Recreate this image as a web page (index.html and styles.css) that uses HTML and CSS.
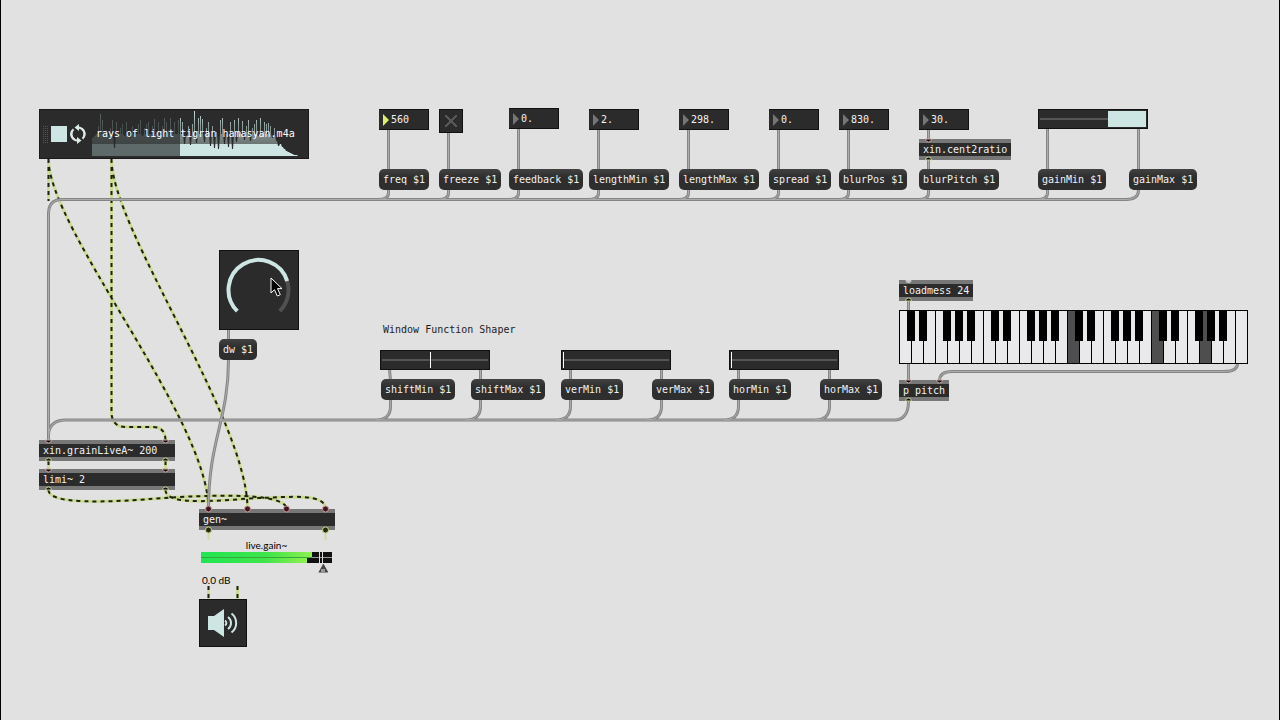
FILE: index.html
```html
<!DOCTYPE html>
<html lang="en">

<head>
    <meta charset="utf-8">
    <title>grain patch</title>
    <link rel="stylesheet" href="styles.css">
</head>

<body>
    <main class="patcher">
        <!-- patch cords -->
        <svg class="cords" aria-hidden="true">
            <defs>
                <path id="signal" d="M48.5 159V201
                    M48.5 159C48.5 229 208.5 419 208.5 509
                    M111.5 159C111.5 229 247.5 419 247.5 509
                    M111.5 159V412Q111.5 427 126 427H153Q165.5 427 165.5 441
                    M48.5 461V470M165.5 461V470
                    M48.5 490C48.5 505 110 502 150 499S286.5 490 286.5 509
                    M165.5 490C165.5 508 230 499 260 498S325.5 493 325.5 509
                    M208.5 586V599M237.5 586V599" />
                <path id="control" d="M1138.5 190Q1138.5 199.5 1126 199.5H62Q48.5 199.5 48.5 214V441
                    M388.5 129V193Q388.5 199.5 378 199.5
                    M448.5 133V193Q448.5 199.5 438 199.5
                    M518.5 129V193Q518.5 199.5 508 199.5
                    M598.5 129V193Q598.5 199.5 588 199.5
                    M688.5 129V193Q688.5 199.5 678 199.5
                    M778.5 129V193Q778.5 199.5 768 199.5
                    M848.5 129V193Q848.5 199.5 838 199.5
                    M928.5 129V193Q928.5 199.5 918 199.5
                    M1047.5 129V193Q1047.5 199.5 1037 199.5
                    M1138.5 129V170
                    M908.5 401Q908.5 420 894 420H66Q48.5 420 48.5 436
                    M389.5 370L390.5 380V406Q390.5 420 376 420
                    M480.5 370V406Q480.5 420 466 420
                    M570.5 370V406Q570.5 420 556 420
                    M661.5 370V406Q661.5 420 647 420
                    M738.5 370V406Q738.5 420 724 420
                    M829.5 370V406Q829.5 420 815 420
                    M908.5 300V311M908.5 363V381
                    M1237.5 363Q1238 371.5 1224 371.5H952Q939.5 371.5 939.5 381
                    M228.5 330V340
                    M228.5 360C228.5 420 208.5 440 208.5 509" />
            </defs>
            <use href="#signal" class="signal-base" />
            <use href="#signal" class="signal-dash" />
            <path class="signal-stub" d="M208.5 531V540M325.5 531V540" />
            <use href="#control" class="control-base" />
            <use href="#control" class="control-core" />
        </svg>

        <!-- playlist -->
        <section class="node player">
            <span class="grip"></span>
            <button class="stop" aria-label="Stop"></button>
            <button class="loop" aria-label="Loop">
                <svg width="18" height="20" viewBox="0 0 18 20">
                    <path class="loop-arc" d="M5.500 15.500A6.500 6.500 0 0 1 4.500 5.300M9 3.500A6.500 6.500 0 0 1 14.800 13" />
                    <path class="loop-arc" d="M3.200 6.500A6.500 6.500 0 0 0 9 16.500M12.500 4.500A6.500 6.500 0 0 1 13.500 14.700" />
                    <path class="loop-head" d="M10 0v7L5.500 3.500zM8 20v-7l4.500 3.500z" />
                </svg>
            </button>
            <div class="clip">
                <svg class="wave" width="216" height="50" viewBox="0 0 216 50">
                    <defs>
                        <clipPath id="waveClip">
                            <path id="wavePath" d="" />
                        </clipPath>
                        <linearGradient id="shade" x1="0" y1="0" x2="0" y2="1">
                            <stop offset="0" stop-color="#2b2b2b" stop-opacity="0" />
                            <stop offset=".5" stop-color="#2b2b2b" stop-opacity=".4" />
                            <stop offset="1" stop-color="#2b2b2b" stop-opacity=".6" />
                        </linearGradient>
                    </defs>
                    <g clip-path="url(#waveClip)">
                        <rect class="played" width="88" height="47" />
                        <rect class="rest" x="88" width="128" height="47" />
                    </g>
                    <rect width="216" height="35" fill="url(#shade)" />
                </svg>
                <span class="clip-name">rays of light tigran hamasyan.m4a</span>
            </div>
        </section>

        <!-- grain parameters -->
        <label class="node number row-value col-freq active"><input type="text" value="560" aria-label="freq"></label>
        <input class="node toggle row-value col-freeze" type="checkbox" aria-label="freeze">
        <label class="node number row-feedback col-feedback"><input type="text" value="0." aria-label="feedback"></label>
        <label class="node number row-value col-length-min"><input type="text" value="2." aria-label="lengthMin"></label>
        <label class="node number row-value col-length-max"><input type="text" value="298." aria-label="lengthMax"></label>
        <label class="node number row-value col-spread"><input type="text" value="0." aria-label="spread"></label>
        <label class="node number row-value col-blur-pos"><input type="text" value="830." aria-label="blurPos"></label>
        <label class="node number row-value col-blur-pitch"><input type="text" value="30." aria-label="blurPitch"></label>
        <input class="node range gain row-value col-gain-min" type="range" value="100" aria-label="gain range">

        <div class="node object ratio col-blur-pitch">xin.cent2ratio</div>

        <button class="node message row-param col-freq">freq $1</button>
        <button class="node message row-param col-freeze">freeze $1</button>
        <button class="node message row-param col-feedback">feedback $1</button>
        <button class="node message row-param col-length-min">lengthMin $1</button>
        <button class="node message row-param col-length-max">lengthMax $1</button>
        <button class="node message row-param col-spread">spread $1</button>
        <button class="node message row-param col-blur-pos">blurPos $1</button>
        <button class="node message row-param col-blur-pitch">blurPitch $1</button>
        <button class="node message row-param col-gain-min">gainMin $1</button>
        <button class="node message row-param col-gain-max">gainMax $1</button>

        <!-- dry / wet -->
        <div class="node dial">
            <svg width="80" height="80" viewBox="0 0 80 80" aria-hidden="true">
                <path class="dial-track" d="M68.200 31.200A30 30 0 0 1 60.700 61.200" />
                <path class="dial-value" d="M18.300 61.200A30 30 0 1 1 68.200 31.200" />
            </svg>
            <input type="range" value="73" aria-label="dry wet">
        </div>
        <button class="node message dry-wet">dw $1</button>

        <!-- window shaper -->
        <p class="node comment">Window Function Shaper</p>
        <input class="node range row-shape col-shift" type="range" value="46" aria-label="shift range">
        <input class="node range row-shape col-ver-min" type="range" value="0" aria-label="ver range">
        <input class="node range row-shape col-hor-min" type="range" value="0" aria-label="hor range">
        <button class="node message row-window col-shift-min">shiftMin $1</button>
        <button class="node message row-window col-shift-max">shiftMax $1</button>
        <button class="node message row-window col-ver-min">verMin $1</button>
        <button class="node message row-window col-ver-max">verMax $1</button>
        <button class="node message row-window col-hor-min">horMin $1</button>
        <button class="node message row-window col-hor-max">horMax $1</button>

        <!-- pitch keyboard -->
        <div class="node object loadmess">loadmess 24</div>
        <div class="node keyboard" id="keyboard"></div>
        <div class="node object pitch">p pitch</div>

        <!-- audio chain -->
        <div class="node object wide grain">xin.grainLiveA~ 200</div>
        <div class="node object wide limi">limi~ 2</div>
        <div class="node object wide gen">gen~</div>

        <section class="node live-gain">
            <label for="gain">live.gain~</label>
            <div class="meter">
                <span class="level left"></span>
                <span class="level right"></span>
            </div>
            <input id="gain" type="range" value="97">
            <output for="gain">0.0 dB</output>
        </section>

        <button class="node dac" aria-label="Audio on">
            <svg width="32" height="30" viewBox="0 0 32 30">
                <path class="cone" d="M1 8h6L17 1v28L7 22H1z" />
                <path class="waves" d="M18 12.500a3 3 0 0 1 0 5M21 9a7.500 7.500 0 0 1 0 12M24.500 5.500a12 12 0 0 1 0 19" />
            </svg>
        </button>

        <!-- inlets and outlets -->
        <svg class="cords ports" aria-hidden="true">
            <g class="inlet-cut">
                <path d="M925.500 139h6a3 3 0 0 1-6 0z" />
                <path d="M905.500 380h6a3 3 0 0 1-6 0zM936.500 380h6a3 3 0 0 1-6 0z" />
                <path d="M45.500 440h6a3 3 0 0 1-6 0zM162.500 440h6a3 3 0 0 1-6 0z" />
                <path d="M45.500 469h6a3 3 0 0 1-6 0zM162.500 469h6a3 3 0 0 1-6 0z" />
            </g>
            <g class="outlet-cut">
                <path d="M925.500 160h6a3 3 0 0 0-6 0z" />
                <path d="M905.500 301h6a3 3 0 0 0-6 0z" />
                <path d="M905.500 401h6a3 3 0 0 0-6 0z" />
                <path d="M45.500 461h6a3 3 0 0 0-6 0zM162.500 461h6a3 3 0 0 0-6 0z" />
                <path d="M45.500 490h6a3 3 0 0 0-6 0zM162.500 490h6a3 3 0 0 0-6 0z" />
            </g>
            <path class="inlet-free" d="M905.500 280h6a3 3 0 0 1-6 0z" />
            <g class="inlet">
                <circle cx="208.500" cy="509" r="3" />
                <circle cx="247.500" cy="509" r="3" />
                <circle cx="286.500" cy="509" r="3" />
                <circle cx="325.500" cy="509" r="3" />
            </g>
            <g class="outlet">
                <circle cx="208.500" cy="530" r="3" />
                <circle cx="325.500" cy="530" r="3" />
            </g>
        </svg>

        <svg class="node cursor" width="16" height="22" viewBox="0 0 16 22" aria-hidden="true">
            <path d="M1 1v15l3.500-3.300 2.800 6.300 3-1.300-2.800-6.100H12z" />
        </svg>
    </main>
    <script src="patch.js"></script>
</body>

</html>
```

FILE: styles.css
```css
* {
    box-sizing: border-box;
    margin: 0;
    padding: 0;
}

body,
button,
input {
    font-family: "DejaVu Sans Mono", "Liberation Mono", monospace;
    font-size: 10px;
}

button,
input {
    border: none;
    appearance: none;
}

.patcher {
    position: relative;
    min-height: 100vh;
    overflow: hidden;
    background: #e1e1e1;
    box-shadow: inset 1px 0 #000, inset -1px 0 #000;
}

.node {
    position: absolute;
}

/* cords */
.cords {
    position: absolute;
    top: 0;
    left: 0;
    width: 100%;
    height: 100%;
    fill: none;
    pointer-events: none;
}

.signal-base {
    stroke: #cbdc92;
    stroke-width: 3px;
}

.signal-dash {
    stroke: #1d2310;
    stroke-width: 2px;
    stroke-dasharray: 4 4;
}

.signal-stub {
    stroke: #d0d8a8;
    stroke-width: 2px;
}

.control-base {
    stroke: #858585;
    stroke-width: 3px;
}

.control-core {
    stroke: #acacac;
    stroke-width: 1px;
}

.inlet-cut {
    fill: #111;
    stroke: #c9a6a2;
}

.outlet-cut {
    fill: #111;
    stroke: #c4cf8f;
}

.inlet-free {
    fill: #c8c8c8;
}

.inlet {
    fill: #3d1620;
    stroke: #c99c9c;
}

.outlet {
    fill: #222b10;
    stroke: #c4d387;
}

/* boxes */
.object {
    height: 21px;
    padding: 0 4px;
    border: solid #777;
    border-width: 4px 0;
    background: #2b2b2b;
    color: #f2f2f2;
    line-height: 13px;
    white-space: nowrap;
}

.wide {
    width: 136px;
}

.message {
    height: 21px;
    padding: 0 4px;
    border-radius: 5px;
    background: linear-gradient(#424242, #2e2e2e 40%);
    color: #f2f2f2;
    line-height: 21px;
    white-space: nowrap;
}

.number {
    display: flex;
    align-items: center;
    gap: 2px;
    width: 50px;
    height: 21px;
    padding: 0 4px;
    border: 1px solid #111;
    border-left-width: 0;
    background: #2b2b2b;
}

.number::before {
    content: "";
    border: solid transparent;
    border-width: 6px 0 6px 6px;
    border-left-color: #757575;
}

.number.active::before {
    border-left-color: #dcf06b;
}

.number input {
    width: 34px;
    background: none;
    color: #f2f2f2;
}

.toggle {
    width: 24px;
    height: 24px;
    border: 1px solid #111;
    background:
        linear-gradient(45deg, transparent 45%, #585858 45% 55%, transparent 55%) center / 12px 12px no-repeat,
        linear-gradient(-45deg, transparent 45%, #585858 45% 55%, transparent 55%) center / 12px 12px no-repeat,
        #2b2b2b;
}

.range {
    width: 110px;
    height: 20px;
    padding: 0 1px;
    border: 1px solid #111;
    background: linear-gradient(#555, #555) center / 106px 2px no-repeat #2b2b2b;
}

.range::-webkit-slider-thumb {
    appearance: none;
    width: 1px;
    height: 16px;
    background: #fff;
}

.gain::-webkit-slider-thumb {
    width: 38px;
    background: #cde6e3;
}

.comment {
    top: 323px;
    left: 383px;
    color: #1c1c1c;
    line-height: 13px;
}

/* rows */
.row-value { top: 109px; }
.row-feedback { top: 108px; }
.row-param { top: 169px; }
.row-shape { top: 350px; }
.row-window { top: 379px; }

/* columns */
.col-freq { left: 379px; }
.col-freeze { left: 439px; }
.col-feedback { left: 509px; }
.col-length-min { left: 589px; }
.col-length-max { left: 679px; }
.col-spread { left: 769px; }
.col-blur-pos { left: 839px; }
.col-blur-pitch { left: 919px; }
.col-gain-min { left: 1038px; }
.col-gain-max { left: 1129px; }
.col-shift { left: 380px; }
.col-shift-min { left: 381px; }
.col-shift-max { left: 471px; }
.col-ver-min { left: 561px; }
.col-ver-max { left: 652px; }
.col-hor-min { left: 729px; }
.col-hor-max { left: 820px; }

/* single boxes */
.ratio { top: 139px; }
.loadmess { top: 280px; left: 899px; }
.pitch { top: 380px; left: 899px; }
.grain { top: 440px; left: 39px; }
.limi { top: 469px; left: 39px; }
.gen { top: 509px; left: 199px; }
.dry-wet { top: 339px; left: 219px; }

/* player */
.player {
    top: 109px;
    left: 39px;
    display: flex;
    align-items: center;
    width: 270px;
    height: 50px;
    padding-left: 3px;
    border: 1px solid #1a1a1a;
    background: #2b2b2b;
}

.grip {
    width: 5px;
    height: 18px;
    margin-right: 3px;
    background: repeating-linear-gradient(#2b2b2b 0 1px, transparent 1px 2px), repeating-linear-gradient(90deg, #555 0 1px, transparent 1px 2px);
}

.stop {
    width: 16px;
    height: 16px;
    margin-right: 2px;
    background: #cde6e3;
}

.loop {
    width: 18px;
    height: 20px;
    margin-right: 5px;
    background: none;
}

.loop svg {
    display: block;
}

.loop-arc {
    fill: none;
    stroke: #dbe9e7;
    stroke-width: 2px;
}

.loop-head {
    fill: #dbe9e7;
}

.clip {
    position: relative;
    flex: 1;
    height: 50px;
}

.wave {
    display: block;
}

.played {
    fill: #5d6a69;
}

.rest {
    fill: #cde6e3;
}

.clip-name {
    position: absolute;
    top: 18px;
    left: 4px;
    color: #fff;
    line-height: 13px;
    white-space: nowrap;
}

/* dial */
.dial {
    top: 250px;
    left: 219px;
    width: 80px;
    height: 80px;
    outline: 1px solid #111;
    outline-offset: -1px;
    background: #2b2b2b;
}

.dial svg {
    fill: none;
    stroke-width: 4px;
}

.dial-track {
    stroke: #505050;
}

.dial-value {
    stroke: #cde6e3;
}

.dial input {
    position: absolute;
    inset: 0;
    width: 100%;
    opacity: 0;
}

.cursor {
    top: 277px;
    left: 270px;
    fill: #000;
    stroke: #fff;
    stroke-width: 1px;
}

/* keyboard */
.keyboard {
    top: 310px;
    left: 899px;
    display: flex;
    height: 54px;
    border: 1px solid #000;
    border-right: none;
    background: #000;
}

.key {
    position: relative;
    width: 12px;
    border-right: 1px solid #000;
    background: #e9e9ec;
}

.key.held {
    background: #4e4e4e;
}

.sharp {
    position: relative;
    z-index: 1;
    width: 8px;
    height: 30px;
    margin: 0 -3px 0 -5px;
    background: #000;
}

/* output gain */
.live-gain {
    top: 538px;
    left: 201px;
    display: flex;
    flex-direction: column;
    width: 131px;
    color: #000;
    font-family: Lato, sans-serif;
    line-height: 14px;
}

.live-gain label {
    text-align: center;
}

.meter {
    display: flex;
    flex-direction: column;
    height: 11px;
    background:
        linear-gradient(90deg, transparent 118px, #ddd 118px 119px, transparent 119px 121px, #ddd 121px 122px, transparent 122px),
        linear-gradient(transparent 5px, #999 5px 6px, transparent 6px),
        #111;
}

.level {
    height: 5px;
    background: linear-gradient(90deg, #20e552, #3fe54a 60%, #8ff04e);
}

.level.left {
    width: 111px;
    border-bottom: 1px solid #37a63f;
    height: 6px;
}

.level.right {
    width: 106px;
}

.live-gain input {
    width: 131px;
    height: 10px;
    background: none;
}

.live-gain input::-webkit-slider-thumb {
    appearance: none;
    width: 10px;
    height: 9px;
    background:
        linear-gradient(#999, #999) center 5px / 4px 3px no-repeat,
        #444;
    clip-path: polygon(50% 0, 100% 100%, 0 100%);
}

.live-gain output {
    padding: 0 1px;
}

.dac {
    top: 599px;
    left: 199px;
    display: flex;
    align-items: center;
    justify-content: center;
    width: 48px;
    height: 48px;
    border: 1px solid #111;
    background: #2b2b2b;
}

.cone {
    fill: #cde6e3;
}

.waves {
    fill: none;
    stroke: #cde6e3;
    stroke-width: 2px;
}
```

FILE: patch.js
```javascript
// 1. waveform peaks, one every 2px
var peaks = [
    18, 20, 22, 30, 42, 36, 24, 26, 20, 28, 36, 8, 34, 22, 28, 32, 20, 34, 22, 18, 30, 26,
    22, 32, 36, 20, 28, 32, 34, 22, 30, 37, 24, 34, 20, 30, 38, 34, 26, 38, 24, 34, 22, 36,
    38, 34, 12, 20, 30, 11, 32, 45, 13, 38, 40, 37, 14, 28, 34, 10, 30, 8, 24, 7, 36,
    38, 12, 22, 9, 34, 7, 36, 14, 38, 24, 35, 16, 30, 36, 15, 28, 32, 36, 20, 38, 22,
    34, 32, 33, 30, 18, 28, 15, 10, 12, 9, 7, 5, 4, 3, 2, 1, 1, 0
];
var d = 'M0 47';
for (var i = 0; i < peaks.length; i++) {
    var x = i * 2;
    var low = 47 - Math.min(peaks[i], 22);
    var high = 47 - peaks[i];
    d += 'L' + x + ' ' + low + 'V' + high + 'H' + (x + 1) + 'V' + low;
}
document.getElementById('wavePath').setAttribute('d', d + 'V47Z');

// 2. keyboard, starts on C
var keyboard = document.getElementById('keyboard');
var hasSharp = [true, true, false, true, true, true, false];
var held = [14, 21, 25];

function addKey(className, name) {
    var key = document.createElement('button');
    key.className = className;
    key.setAttribute('aria-label', name);
    keyboard.appendChild(key);
}

for (var j = 0; j < 29; j++) {
    var note = 'CDEFGAB'.charAt(j % 7);
    addKey(held.indexOf(j) > -1 ? 'key held' : 'key', note);
    if (hasSharp[j % 7] && j < 28) {
        addKey('sharp', note + ' sharp');
    }
}
```
